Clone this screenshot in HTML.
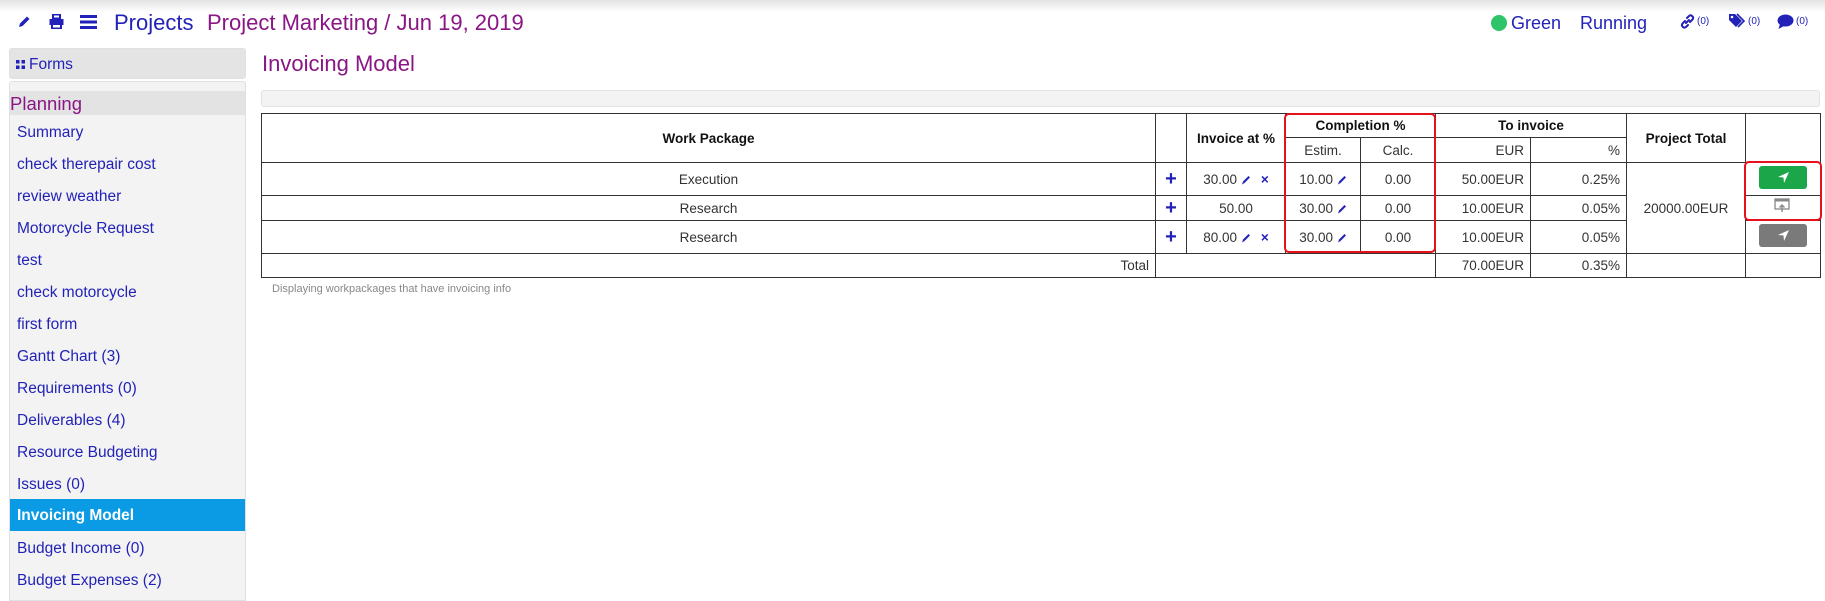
<!DOCTYPE html>
<html><head><meta charset="utf-8"><style>
*{box-sizing:border-box;margin:0;padding:0}
body{width:1825px;height:598px;overflow:hidden;background:#fff;font-family:"Liberation Sans",sans-serif;position:relative}
.abs{position:absolute}
.topsh{left:0;top:0;width:1825px;height:12px;background:linear-gradient(#e2e2e2,#fff)}
.hdr{top:10px;font-size:22px;white-space:nowrap}
.blue{color:#2222b8}
.purp{color:#8a1585}
.side{left:9px;width:237px;background:#f3f3f3;border:1px solid #e0e0e0}
.item{position:absolute;left:17px;font-size:15.5px;color:#2222b8;white-space:nowrap}
table{position:absolute;left:261px;top:113px;border-collapse:collapse;table-layout:fixed;font-size:13.5px;color:#333}
td,th{border:1px solid #333;text-align:center;padding:0 6px;white-space:nowrap}
th{font-weight:bold;color:#111}
.r{text-align:right}
.pen{display:inline-block;width:10px;height:10px;vertical-align:middle}
.x{color:#2222b8;font-weight:bold;margin-left:10px}
.plus{color:#2222b8;font-size:20px;font-weight:bold}
.btn{position:absolute;left:1759px;width:48px;height:23px;border-radius:3px}
.red{position:absolute;border:2px solid #e8101a;border-radius:5px}
</style></head><body>
<div class="abs topsh"></div>
<svg class="abs" style="left:18px;top:15px" width="13" height="13" viewBox="0 0 13 13"><path d="M1 12 L2 8.5 L9 1.5 L11.5 4 L4.5 11 Z" fill="#2222b8"/></svg>
<svg class="abs" style="left:49px;top:14px" width="15" height="15" viewBox="0 0 15 15"><rect x="4" y="0.5" width="7" height="4" fill="none" stroke="#2222b8" stroke-width="2"/><rect x="0.5" y="5" width="14" height="6" fill="#2222b8"/><rect x="3" y="10" width="9" height="4.5" fill="none" stroke="#2222b8" stroke-width="2"/></svg>
<svg class="abs" style="left:80px;top:15px" width="17" height="14" viewBox="0 0 17 14"><rect y="0" width="17" height="3" fill="#2222b8"/><rect y="5.5" width="17" height="3" fill="#2222b8"/><rect y="11" width="17" height="3" fill="#2222b8"/></svg>
<div class="abs hdr blue" style="left:114px">Projects</div>
<div class="abs hdr purp" style="left:207px">Project Marketing / Jun 19, 2019</div>
<div class="abs" style="left:1491px;top:15px;width:16px;height:16px;border-radius:50%;background:#2dc46a"></div>
<div class="abs blue" style="left:1511px;top:13px;font-size:18px">Green</div>
<div class="abs blue" style="left:1580px;top:13px;font-size:18px">Running</div>
<svg class="abs" style="left:1680px;top:14px" width="15" height="15" viewBox="0 0 15 15"><path d="M6 9 L9 6 M7 4 L9 2 Q11 0.5 12.5 2.5 Q14 4 12 6 L10 8 M8 11 L6 13 Q4 14.5 2.5 12.5 Q1 11 3 9 L5 7" fill="none" stroke="#2222b8" stroke-width="2" stroke-linecap="round"/></svg>
<div class="abs blue" style="left:1697px;top:16px;font-size:10px">(0)</div>
<svg class="abs" style="left:1728px;top:13px" width="18" height="17" viewBox="0 0 18 17"><path d="M1 1 H7 L14 8 L8 14 L1 7 Z" fill="#2222b8"/><path d="M9 1 L16 8 L10 14" fill="none" stroke="#2222b8" stroke-width="1.6"/><circle cx="4" cy="4" r="1.3" fill="#fff"/></svg>
<div class="abs blue" style="left:1748px;top:16px;font-size:10px">(0)</div>
<svg class="abs" style="left:1777px;top:14px" width="17" height="16" viewBox="0 0 17 16"><ellipse cx="8.5" cy="6.5" rx="8" ry="6" fill="#2222b8"/><path d="M3 10 L1.5 15 L7 12 Z" fill="#2222b8"/></svg>
<div class="abs blue" style="left:1796px;top:16px;font-size:10px">(0)</div>

<div class="abs side" style="top:48px;height:31px;background:#e4e4e4;border-radius:3px"></div>
<svg class="abs" style="left:16px;top:60px" width="9" height="9" viewBox="0 0 9 9"><rect width="3.5" height="3.5" fill="#2222b8"/><rect x="5.5" width="3.5" height="3.5" fill="#2222b8"/><rect y="5.5" width="3.5" height="3.5" fill="#2222b8"/><rect x="5.5" y="5.5" width="3.5" height="3.5" fill="#2222b8"/></svg>
<div class="abs blue" style="left:29px;top:56px;font-size:15.5px">Forms</div>
<div class="abs side" style="top:81px;height:520px;border-radius:3px 3px 0 0"></div>
<div class="abs" style="left:10px;top:91px;width:235px;height:24px;background:#e3e3e3"></div>
<div class="abs purp" style="left:10px;top:93px;font-size:18.5px">Planning</div>
<div class="abs" style="left:10px;top:499px;width:235px;height:32px;background:#0b9be5"></div>
<div class="item" style="top:124px">Summary</div>
<div class="item" style="top:156px">check therepair cost</div>
<div class="item" style="top:188px">review weather</div>
<div class="item" style="top:220px">Motorcycle Request</div>
<div class="item" style="top:252px">test</div>
<div class="item" style="top:284px">check motorcycle</div>
<div class="item" style="top:316px">first form</div>
<div class="item" style="top:348px">Gantt Chart (3)</div>
<div class="item" style="top:380px">Requirements (0)</div>
<div class="item" style="top:412px">Deliverables (4)</div>
<div class="item" style="top:444px">Resource Budgeting</div>
<div class="item" style="top:476px">Issues (0)</div>
<div class="item" style="top:507px;color:#fff;font-weight:bold">Invoicing Model</div>
<div class="item" style="top:540px">Budget Income (0)</div>
<div class="item" style="top:572px">Budget Expenses (2)</div>

<div class="abs purp" style="left:262px;top:51px;font-size:22px">Invoicing Model</div>
<div class="abs" style="left:261px;top:90px;width:1559px;height:17px;background:#f3f3f3;border:1px solid #e2e2e2;border-radius:3px"></div>

<table>
<colgroup><col style="width:894px"><col style="width:31px"><col style="width:99px"><col style="width:75px"><col style="width:75px"><col style="width:95px"><col style="width:96px"><col style="width:119px"><col style="width:75px"></colgroup>
<tr style="height:24px"><th rowspan="2">Work Package</th><th rowspan="2"></th><th rowspan="2">Invoice at %</th><th colspan="2">Completion %</th><th colspan="2">To invoice</th><th rowspan="2">Project Total</th><th rowspan="2"></th></tr>
<tr style="height:25px"><td>Estim.</td><td>Calc.</td><td class="r">EUR</td><td class="r">%</td></tr>
<tr style="height:33px"><td>Execution</td><td class="plus">+</td><td>30.00 <svg class="pen" viewBox="0 0 10 10"><path d="M1 9.5 L2 6.5 L7.5 1 L9 2.5 L3.5 8 Z" fill="#2222b8"/></svg><span class="x">×</span></td><td>10.00 <svg class="pen" viewBox="0 0 10 10"><path d="M1 9.5 L2 6.5 L7.5 1 L9 2.5 L3.5 8 Z" fill="#2222b8"/></svg></td><td>0.00</td><td class="r">50.00EUR</td><td class="r">0.25%</td><td rowspan="3">20000.00EUR</td><td></td></tr>
<tr style="height:25px"><td>Research</td><td class="plus">+</td><td>50.00</td><td>30.00 <svg class="pen" viewBox="0 0 10 10"><path d="M1 9.5 L2 6.5 L7.5 1 L9 2.5 L3.5 8 Z" fill="#2222b8"/></svg></td><td>0.00</td><td class="r">10.00EUR</td><td class="r">0.05%</td><td></td></tr>
<tr style="height:33px"><td>Research</td><td class="plus">+</td><td>80.00 <svg class="pen" viewBox="0 0 10 10"><path d="M1 9.5 L2 6.5 L7.5 1 L9 2.5 L3.5 8 Z" fill="#2222b8"/></svg><span class="x">×</span></td><td>30.00 <svg class="pen" viewBox="0 0 10 10"><path d="M1 9.5 L2 6.5 L7.5 1 L9 2.5 L3.5 8 Z" fill="#2222b8"/></svg></td><td>0.00</td><td class="r">10.00EUR</td><td class="r">0.05%</td><td></td></tr>
<tr style="height:24px"><td class="r">Total</td><td colspan="4" style="border-left:1px solid #333"></td><td class="r">70.00EUR</td><td class="r">0.35%</td><td></td><td></td></tr>
</table>
<div class="abs" style="left:272px;top:283px;font-size:11px;color:#888">Displaying workpackages that have invoicing info</div>

<div class="btn" style="top:166px;background:#1ca64a"></div>
<svg class="abs" style="left:1777px;top:171px" width="13" height="13" viewBox="0 0 13 13"><path d="M12 1 L1 6 L6.5 6.5 L7 12 Z" fill="#fff"/></svg>
<svg class="abs" style="left:1774px;top:198px" width="16" height="15" viewBox="0 0 16 15"><rect x="1" y="1" width="14" height="10" fill="none" stroke="#888" stroke-width="1.3"/><rect x="1" y="1" width="14" height="2.5" fill="#888"/><path d="M8 14 V7 M5.5 9.5 L8 7 L10.5 9.5" fill="none" stroke="#888" stroke-width="1.4"/></svg>
<div class="btn" style="top:224px;background:#7a7a7a"></div>
<svg class="abs" style="left:1777px;top:229px" width="13" height="13" viewBox="0 0 13 13"><path d="M12 1 L1 6 L6.5 6.5 L7 12 Z" fill="#fff"/></svg>

<div class="red" style="left:1284px;top:113px;width:152px;height:140px"></div>
<div class="red" style="left:1744px;top:161px;width:78px;height:60px"></div>
</body></html>
